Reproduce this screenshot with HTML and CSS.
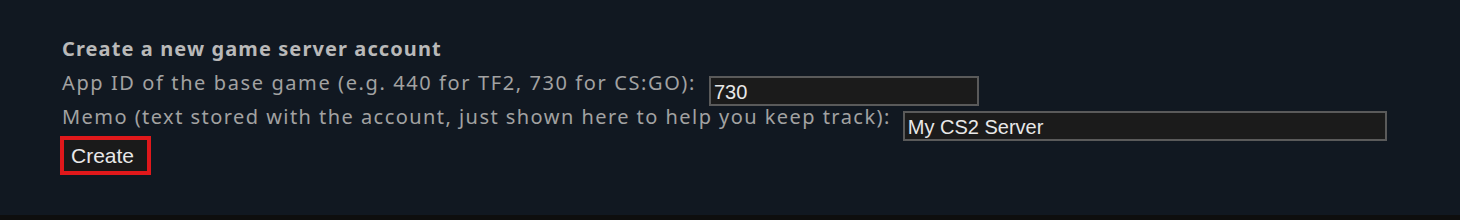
FILE: index.html
```html
<!DOCTYPE html>
<html>
<head>
<meta charset="utf-8">
<link rel="stylesheet" href="styles.css">
</head>
<body>
<div class="panel">
  <div class="form">
    <div class="heading">Create a new game server account</div>
    <div class="row">
      <span class="label">App ID of the base game (e.g. 440 for TF2, 730 for CS:GO):</span>
      <input class="field field-appid" type="text" value="730">
    </div>
    <div class="row">
      <span class="label label-memo">Memo (text stored with the account, just shown here to help you keep track):</span>
      <input class="field field-memo" type="text" value="My CS2 Server">
    </div>
    <div class="row row-action">
      <button class="create">Create</button>
    </div>
  </div>
</div>
</body>
</html>
```
FILE: styles.css
```css
html, body {
  margin: 0;
  padding: 0;
  background: #0e0e0e;
}
.panel {
  height: 215px;
  background: #111821;
  box-sizing: border-box;
  padding: 32px 0 0 62px;
}
.form {
  font-family: "Noto Sans", "Open Sans", sans-serif;
  font-size: 20px;
  line-height: 34px;
  color: #a2a2a2;
}
.heading {
  height: 34px;
  font-weight: 700;
  letter-spacing: 1.1px;
  color: #b9b9b9;
  white-space: nowrap;
}
.row {
  display: flex;
  align-items: flex-start;
  height: 34px;
  white-space: nowrap;
}
.label {
  letter-spacing: 1.6px;
}
.label-memo {
  letter-spacing: 1.45px;
}
.field {
  font-family: "Liberation Sans", Arial, sans-serif;
  font-size: 20px;
  line-height: 24px;
  color: #e8e8e8;
  background: #1b1b1b;
  border: 2px solid #5a5a5a;
  box-sizing: border-box;
  height: 30px;
  padding: 2px 3px 0;
  margin: 10px 0 0 7px;
  outline: none;
}
.field-appid {
  width: 270px;
  margin-left: 13px;
}
.field-memo {
  width: 484px;
  margin-top: 11px;
  margin-left: 12px;
}
.create {
  font-family: "Liberation Sans", Arial, sans-serif;
  font-size: 21px;
  line-height: 24px;
  color: #e8e8e8;
  background: #1a1a1a;
  border: 4px solid #e0181b;
  box-sizing: border-box;
  width: 91px;
  height: 39px;
  padding: 1px 0 0 7px;
  margin: 2px 0 0 -2px;
  text-align: left;
  cursor: pointer;
}
```
